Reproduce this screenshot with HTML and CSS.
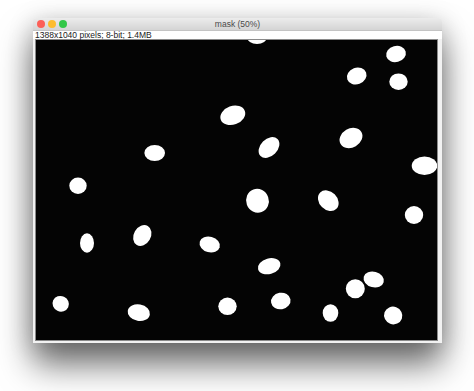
FILE: index.html
```html
<!doctype html>
<html lang="en">
<head>
  <meta charset="utf-8" />
  <title>mask (50%)</title>
  <link rel="stylesheet" href="styles.css">
</head>
<body>
  <div class="window">
    <div class="titlebar">
      <div class="lights">
        <span class="light red"></span>
        <span class="light yellow"></span>
        <span class="light green"></span>
      </div>
      <div class="title">mask (50%)</div>
    </div>
    <div class="info">1388x1040 pixels; 8-bit; 1.4MB</div>

    <!-- binary mask, drawn at 50% -->
    <div class="canvas">
      <svg viewBox="0 0 401 300" width="401" height="300">
        <rect width="401" height="300" fill="#040404" />
        <g fill="#fff">
          <ellipse cx="221" cy="-3" rx="10" ry="7" />
          <ellipse cx="360" cy="14" rx="10" ry="8" transform="rotate(-15 360 14)" />
          <ellipse cx="320.7" cy="36" rx="10" ry="8.3" transform="rotate(-20 320.7 36)" />
          <ellipse cx="362.5" cy="41.7" rx="9.2" ry="8.3" />
          <ellipse cx="196.8" cy="75.3" rx="12.8" ry="9.3" transform="rotate(-20 196.8 75.3)" />
          <ellipse cx="233" cy="107.5" rx="12" ry="8.5" transform="rotate(-45 233 107.5)" />
          <ellipse cx="315" cy="98" rx="12" ry="9.5" transform="rotate(-30 315 98)" />
          <ellipse cx="118.7" cy="113" rx="10.3" ry="8" />
          <ellipse cx="388.5" cy="125.8" rx="12.8" ry="9.2" />
          <ellipse cx="42" cy="145.8" rx="8.7" ry="8.2" />
          <ellipse cx="221.5" cy="160.8" rx="11.3" ry="12" transform="rotate(-20 221.5 160.8)" />
          <ellipse cx="292.3" cy="160.7" rx="11.5" ry="9" transform="rotate(45 292.3 160.7)" />
          <ellipse cx="378" cy="175" rx="9.2" ry="9" />
          <ellipse cx="51" cy="203" rx="7" ry="9.7" />
          <ellipse cx="106.3" cy="195.5" rx="8.5" ry="11" transform="rotate(30 106.3 195.5)" />
          <ellipse cx="173.7" cy="204.5" rx="10.3" ry="7.8" transform="rotate(15 173.7 204.5)" />
          <ellipse cx="233.2" cy="226.2" rx="11.5" ry="7.8" transform="rotate(-15 233.2 226.2)" />
          <ellipse cx="319.3" cy="248.8" rx="9.5" ry="9.5" />
          <ellipse cx="337.7" cy="239.5" rx="10.3" ry="7.8" transform="rotate(15 337.7 239.5)" />
          <ellipse cx="24.7" cy="263.8" rx="8.3" ry="7.8" transform="rotate(25 24.7 263.8)" />
          <ellipse cx="102.8" cy="272.7" rx="11.2" ry="8.3" transform="rotate(10 102.8 272.7)" />
          <ellipse cx="191.5" cy="266.3" rx="9.2" ry="8.7" />
          <ellipse cx="244.8" cy="261" rx="9.8" ry="8.3" transform="rotate(-10 244.8 261)" />
          <ellipse cx="294.5" cy="273" rx="7.8" ry="8.7" />
          <ellipse cx="357.2" cy="275.5" rx="9.2" ry="8.8" transform="rotate(20 357.2 275.5)" />
        </g>
      </svg>
    </div>
  </div>
</body>
</html>
```

FILE: styles.css
```css
html, body { height:100%; }
body { margin:0; padding:18px 0 0 33px; box-sizing:border-box; min-height:391px; background:#fff; font-family:"Liberation Sans", Arial, sans-serif; }
.window { width:409px; padding:0 4px 2px 2px; box-sizing:border-box; background:#f2f2f2; border-radius:4px 4px 0 0; box-shadow:0 22px 34px rgba(0,0,0,.55), 0 4px 26px rgba(0,0,0,.2); }
.titlebar { position:relative; height:13px; margin:0 -4px 0 -2px; background:linear-gradient(#ececec, #d4d4d4); border-radius:4px 4px 0 0; border-bottom:1px solid #c4c4c4; box-sizing:border-box; }
.lights { display:flex; gap:3px; padding:2px 0 0 4px; }
.light { width:8px; height:8px; border-radius:50%; }
.red { background:#fc5f57; }
.yellow { background:#fdbc2e; }
.green { background:#33c748; }
.title { position:absolute; left:0; right:0; top:2px; text-align:center; font-size:8.5px; line-height:9px; color:#4a4a4a; }
.info { height:8px; margin:0 -4px 0 -2px; padding-left:2px; background:#fff; font-size:8.5px; line-height:8px; color:#222; white-space:nowrap; }
.canvas { border:1px solid #8a8a8a; width:401px; height:300px; }
.canvas svg { display:block; }
```
